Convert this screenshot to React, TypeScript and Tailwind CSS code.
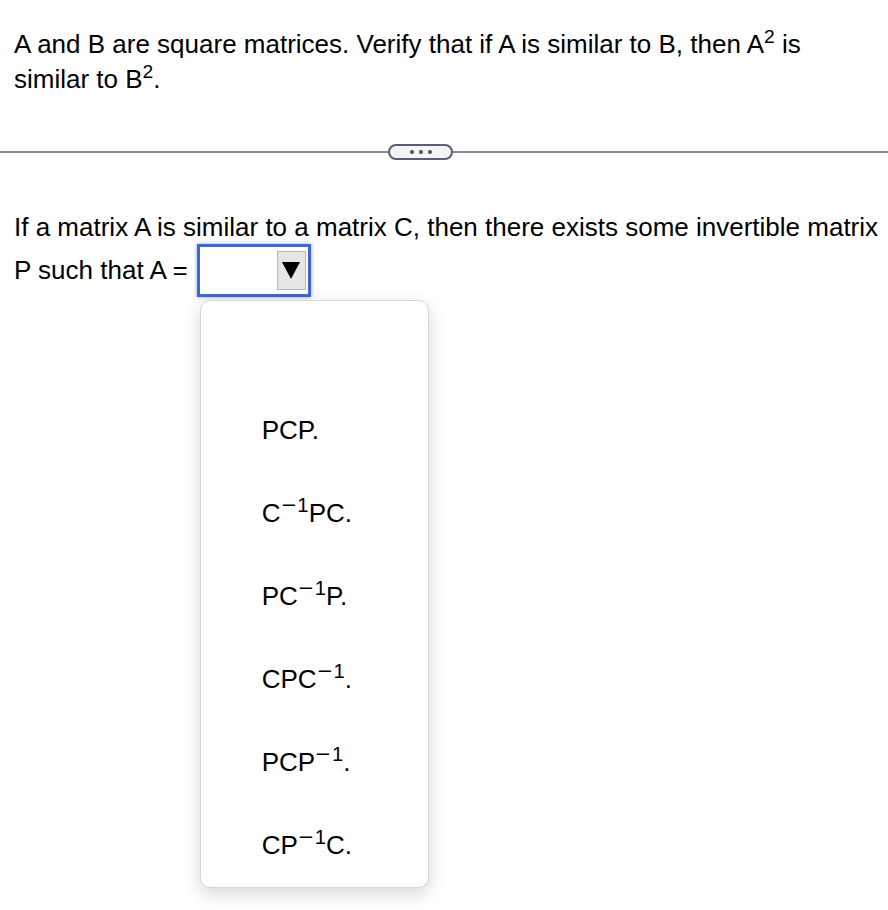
import React from "react";

const options = [
  { id: "pcp", parts: ["PCP."] },
  { id: "cinvpc", parts: ["C", "sup", "PC."] },
  { id: "pcinvp", parts: ["PC", "sup", "P."] },
  { id: "cpcinv", parts: ["CPC", "sup", "."] },
  { id: "pcpinv", parts: ["PCP", "sup", "."] },
  { id: "cpinvc", parts: ["CP", "sup", "C."] },
];

function Inv() {
  return (
    <span className="relative -top-[0.5em] text-[0.78em] ml-[2px]">
      <span className="inline-block scale-x-125">−</span>
      <span className="ml-[3px]">1</span>
    </span>
  );
}

function Option({ parts }: { parts: string[] }) {
  return (
    <div className="h-[40px] leading-[40px] text-[26px] text-black whitespace-nowrap">
      {parts.map((p, i) => (p === "sup" ? <Inv key={i} /> : <span key={i}>{p}</span>))}
    </div>
  );
}

function Sq() {
  return <span className="relative -top-[0.5em] text-[0.74em] leading-none">2</span>;
}

export default function App() {
  return (
    <div
      className="w-[888px] h-[910px] bg-white text-black overflow-hidden"
      style={{ fontFamily: '"Liberation Sans", Arial, sans-serif' }}
    >
      <div className="pl-[14px] pt-[27px] text-[26px] leading-[35px]">
        <div className="whitespace-nowrap">
          A and B are square matrices. Verify that if A is similar to B, then A<Sq /> is
        </div>
        <div className="whitespace-nowrap">
          similar to B<Sq />.
        </div>
      </div>

      {/* divider with collapsed steps pill */}
      <div className="relative mt-[47px] h-[16px] flex items-center">
        <div className="w-full h-[2px] bg-[#858b96]" />
        <div className="absolute left-[388px] top-0 w-[65px] h-[16px] rounded-full border-2 border-[#596170] bg-[#f3f4f6] flex items-center justify-center gap-[5px]">
          <span className="w-[4px] h-[4px] rounded-full bg-[#4b5260]" />
          <span className="w-[4px] h-[4px] rounded-full bg-[#4b5260]" />
          <span className="w-[4px] h-[4px] rounded-full bg-[#4b5260]" />
        </div>
      </div>

      <div className="pl-[14px] mt-[50px] text-[26px]">
        <div className="leading-[35px] whitespace-nowrap">
          If a matrix A is similar to a matrix C, then there exists some invertible matrix
        </div>
        <div className="flex items-center gap-[9px] mt-[-1px]">
          <span className="leading-[35px] whitespace-nowrap">P such that A =</span>
          <div className="relative">
            <div className="w-[114px] h-[53px] border-[3px] border-[#3f66d2] bg-white shadow-[0_0_4px_rgba(63,102,210,0.6)] flex items-center justify-end pr-[2px]">
              <div className="w-[29px] h-[39px] bg-[#e6e6e6] border border-[#b9b9b9] flex items-center justify-center">
                <svg width="18" height="17" viewBox="0 0 18 17">
                  <path d="M0 0 H18 L9 17 Z" fill="#000" />
                </svg>
              </div>
            </div>

            <div className="absolute left-[3px] top-[56px] w-[229px] h-[588px] rounded-[10px] border border-[#d6d6d6] bg-white shadow-[0_6px_18px_rgba(0,0,0,0.16)] pt-[109px] pl-[61px] flex flex-col gap-[43px]">
              {options.map((o) => (
                <Option key={o.id} parts={o.parts} />
              ))}
            </div>
          </div>
        </div>
      </div>
    </div>
  );
}
